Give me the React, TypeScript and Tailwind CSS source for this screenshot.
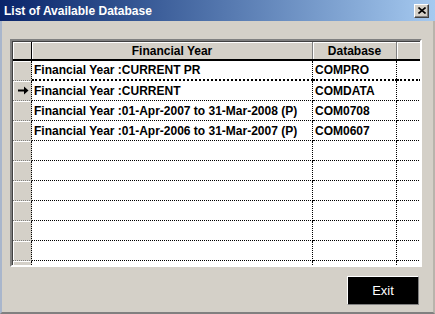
import React from 'react';

type Row = { year: string; db: string };

const ROWS: Row[] = [
  { year: 'Financial Year :CURRENT PR', db: 'COMPRO' },
  { year: 'Financial Year :CURRENT', db: 'COMDATA' },
  { year: 'Financial Year :01-Apr-2007 to 31-Mar-2008 (P)', db: 'COM0708' },
  { year: 'Financial Year :01-Apr-2006 to 31-Mar-2007 (P)', db: 'COM0607' },
  { year: '', db: '' },
  { year: '', db: '' },
  { year: '', db: '' },
  { year: '', db: '' },
  { year: '', db: '' },
  { year: '', db: '' },
  { year: '', db: '' },
];

const Arrow = () => (
  <svg width="11" height="9" viewBox="0 0 11 9">
    <rect x="0" y="3.5" width="7" height="2" fill="#000" />
    <path d="M6 0.5 L10.5 4.5 L6 8.5 Z" fill="#000" />
  </svg>
);

const CloseIcon = () => (
  <svg width="8" height="7" viewBox="0 0 8 7">
    <path d="M0.5 0.5 L7.5 6.5 M7.5 0.5 L0.5 6.5" stroke="#000" strokeWidth="1.6" />
  </svg>
);

const App: React.FC = () => {
  return (
    <div className="w-[435px] h-[314px] bg-[#d4d0c8] flex flex-col font-['Liberation_Sans',Arial,sans-serif] overflow-hidden">
      {/* Title bar */}
      <div className="h-[21px] shrink-0 flex items-center justify-between bg-gradient-to-r from-[#0a246a] to-[#a6caf0] pl-[4px] pr-[6px]">
        <span className="text-white font-bold text-[12px] leading-none">List of Available Database</span>
        <button className="w-[15px] h-[14px] flex items-center justify-center bg-[#d4d0c8] border border-t-white border-l-white border-b-[#404040] border-r-[#404040] shadow-[inset_-1px_-1px_0_#808080]">
          <CloseIcon />
        </button>
      </div>

      {/* Body */}
      <div className="flex-1 flex flex-col border-l-2 border-l-[#a9b6cc] border-r-2 border-r-[#b8b4ac] border-b-2 border-b-[#808080] pt-[18px] pl-[8px] pr-[14px]">
        {/* Grid */}
        <div className="w-[412px] h-[228px] border-2 border-t-[#808080] border-l-[#808080] border-b-white border-r-white">
          <div className="h-full border-t border-l border-[#404040] overflow-hidden bg-[#d4d0c8]">
            {/* Header */}
            <div className="flex h-[19px] border-b-2 border-black text-[12px] font-bold text-black">
              <div className="w-[19px] shrink-0 border-r border-black shadow-[inset_1px_1px_0_white]" />
              <div className="w-[281px] shrink-0 flex items-center justify-center border-r border-[#808080] shadow-[inset_1px_1px_0_white]">
                Financial Year
              </div>
              <div className="w-[84px] shrink-0 flex items-center justify-center border-r border-[#808080] shadow-[inset_1px_1px_0_white]">
                Database
              </div>
              <div className="w-[24px] shrink-0 border-r border-[#808080] shadow-[inset_1px_1px_0_white]" />
            </div>

            {/* Rows */}
            {ROWS.map((r, i) => (
              <div key={i} className="flex h-[20px] text-[12px] font-bold text-black">
                <div className="w-[19px] shrink-0 flex items-center justify-center pl-[2px] bg-[#d4d0c8] border-b border-[#808080] border-r border-r-black border-dotted shadow-[inset_1px_1px_0_white]">
                  {i === 1 && <Arrow />}
                </div>
                <div
                  className={`w-[281px] shrink-0 flex items-center pl-[2px] bg-white border-r border-dotted border-black whitespace-nowrap ${
                    i === 0 ? 'border-b-2 border-b-black' : 'border-b'
                  }`}
                >
                  {r.year}
                </div>
                <div
                  className={`w-[84px] shrink-0 flex items-center pl-[2px] bg-white border-r border-dotted border-black ${
                    i === 0 ? 'border-b-2 border-b-black' : 'border-b'
                  }`}
                >
                  {r.db}
                </div>
                <div
                  className={`w-[24px] shrink-0 bg-white border-dotted border-black ${
                    i === 0 ? 'border-b-2 border-b-black' : 'border-b'
                  }`}
                />
              </div>
            ))}
          </div>
        </div>

        {/* Button row */}
        <div className="flex justify-end mt-[9px]">
          <button className="w-[72px] h-[29px] bg-black text-white text-[13px] border border-t-white border-l-white border-b-[#808080] border-r-[#808080]">
            Exit
          </button>
        </div>
      </div>
    </div>
  );
};

export default App;
